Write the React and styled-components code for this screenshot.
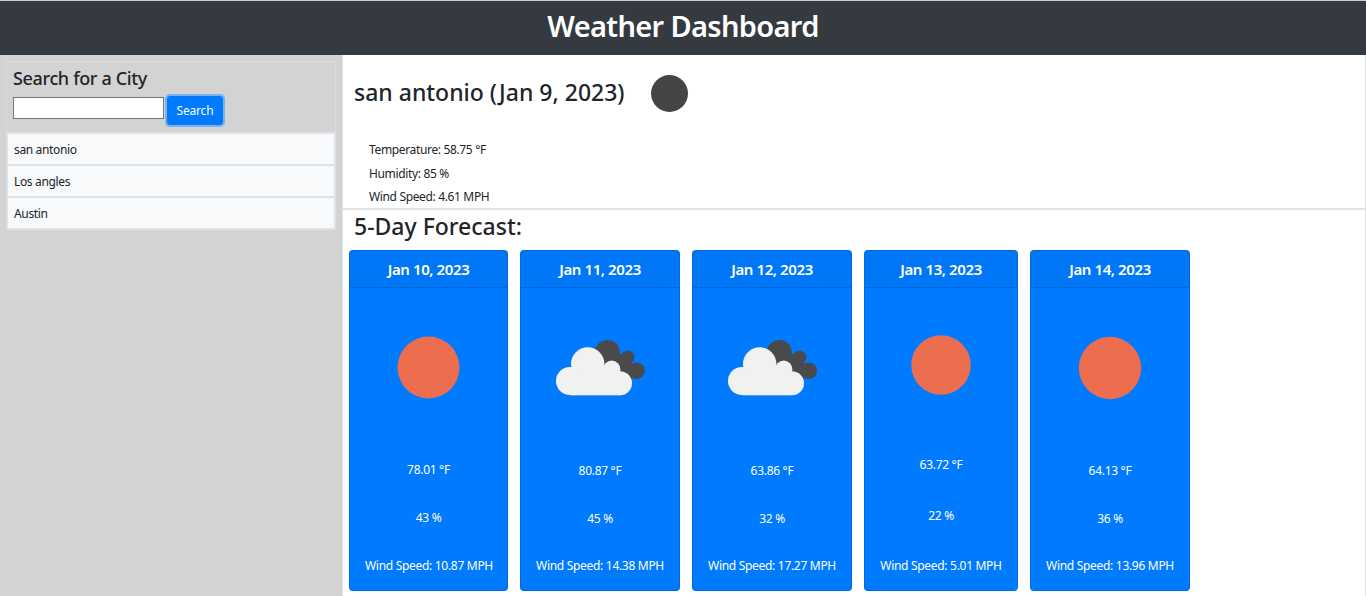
import styled, { createGlobalStyle } from "styled-components";

const FONT = '"Noto Sans", "Open Sans", sans-serif';

const forecast = [
  { date: "Jan 10, 2023", icon: "sun", temp: "78.01", humidity: 43, wind: "10.87", width: 159 },
  { date: "Jan 11, 2023", icon: "cloud", temp: "80.87", humidity: 45, wind: "14.38", width: 160 },
  { date: "Jan 12, 2023", icon: "cloud", temp: "63.86", humidity: 32, wind: "17.27", width: 160 },
  { date: "Jan 13, 2023", icon: "sun", temp: "63.72", humidity: 22, wind: "5.01", width: 154 },
  { date: "Jan 14, 2023", icon: "sun", temp: "64.13", humidity: 36, wind: "13.96", width: 160 },
];

const cities = ["san antonio", "Los angles", "Austin"];

function SunIcon() {
  return (
    <IconSvg viewBox="0 0 128 128">
      <circle cx="64" cy="64" r="31.2" fill="#ed6e4e" />
    </IconSvg>
  );
}

function CloudIcon() {
  return (
    <IconSvg viewBox="0 0 128 128">
      <g fill="#4a4a4d">
        <circle cx="71.3" cy="48.7" r="12.7" />
        <circle cx="91.7" cy="53.3" r="6.7" />
        <circle cx="100.7" cy="66.7" r="8.3" />
        <rect x="66" y="55" width="30" height="20" />
        <rect x="80" y="50" width="8" height="10" />
      </g>
      <g fill="#f1f1ef">
        <circle cx="51.7" cy="60" r="16.7" />
        <circle cx="75.7" cy="65.3" r="8.7" />
        <circle cx="84" cy="79.3" r="12" />
        <circle cx="34" cy="77" r="14" />
        <rect x="34" y="68" width="50" height="23.3" />
        <rect x="60" y="62" width="16" height="10" />
      </g>
    </IconSvg>
  );
}

function ForecastCard({ day }) {
  return (
    <Card $width={day.width}>
      <CardHeader>{day.date}</CardHeader>
      <CardBody>
        {day.icon === "sun" ? <SunIcon /> : <CloudIcon />}
        <CardLines>
          <CardLine>{day.temp} °F</CardLine>
          <CardLine>{day.humidity} %</CardLine>
          <CardLine>Wind Speed: {day.wind} MPH</CardLine>
        </CardLines>
      </CardBody>
    </Card>
  );
}

export default function App() {
  return (
    <>
      <GlobalStyle />
      <Header>
        <Title>Weather Dashboard</Title>
      </Header>
      <Layout>
        <Sidebar>
          <SearchCard>
            <SearchTitle>Search for a City</SearchTitle>
            <SearchForm>
              <SearchInput type="text" />
              <SearchButton type="button">Search</SearchButton>
            </SearchForm>
          </SearchCard>
          <CityList>
            {cities.map((city) => (
              <CityItem key={city}>{city}</CityItem>
            ))}
          </CityList>
        </Sidebar>
        <Main>
          <Current>
            <CurrentHead>
              <CityName>san antonio (Jan 9, 2023)</CityName>
              <MoonDot />
            </CurrentHead>
            <Stats>
              <Stat>Temperature: 58.75 °F</Stat>
              <Stat>Humidity: 85 %</Stat>
              <Stat>Wind Speed: 4.61 MPH</Stat>
            </Stats>
          </Current>
          <ForecastTitle>5-Day Forecast:</ForecastTitle>
          <CardRow>
            {forecast.map((day) => (
              <ForecastCard key={day.date} day={day} />
            ))}
          </CardRow>
        </Main>
      </Layout>
    </>
  );
}

const GlobalStyle = createGlobalStyle`
  html, body {
    margin: 0;
    padding: 0;
    height: 596px;
    overflow: hidden;
    background: #fff;
    color: #212529;
    font-family: ${FONT};
  }
  * {
    box-sizing: border-box;
  }
`;

const Header = styled.header`
  height: 55px;
  padding-bottom: 5px;
  background: #343a40;
  border-top: 1px solid #c8cacc;
  display: flex;
  align-items: center;
  justify-content: center;
`;

const Title = styled.h1`
  margin: 0;
  color: #fff;
  font-size: 29px;
  font-weight: 600;
  line-height: 1;
  letter-spacing: -0.65px;
`;

const Layout = styled.div`
  display: flex;
  height: 541px;
`;

const Sidebar = styled.aside`
  width: 342px;
  flex: none;
  background: #d3d3d3;
  padding: 6px;
`;

const SearchCard = styled.div`
  width: 330px;
  height: 71px;
  border: 1px solid #dcdcdc;
  border-bottom: none;
  padding: 5px 6px 0;
`;

const SearchTitle = styled.h4`
  margin: 0 0 7px;
  font-size: 18px;
  font-weight: 500;
  line-height: 22px;
  letter-spacing: -0.35px;
`;

const SearchForm = styled.div`
  display: flex;
  align-items: flex-start;
  gap: 3px;
`;

const SearchInput = styled.input`
  width: 151px;
  height: 22px;
  margin-top: 1px;
  padding: 1px 2px;
  border: 1px solid #767676;
  background: #fff;
`;

const SearchButton = styled.button`
  width: 56px;
  height: 29px;
  border: 1px solid #007bff;
  border-radius: 3px;
  background: #007bff;
  box-shadow: 0 0 0 2px rgba(38, 143, 255, 0.5);
  color: #fff;
  font-family: ${FONT};
  font-size: 12px;
  letter-spacing: -0.2px;
  padding: 0;
`;

const CityList = styled.ul`
  width: 330px;
  margin: 0;
  padding: 0;
  list-style: none;
  border: 2px solid #dee2e6;
`;

const CityItem = styled.li`
  height: 32px;
  padding: 1px 6px 0;
  display: flex;
  align-items: center;
  background: #f8f9fa;
  border-bottom: 2px solid #dee2e6;
  font-size: 12px;
  letter-spacing: -0.35px;

  &:last-child {
    height: 30px;
    border-bottom: none;
  }
`;

const Main = styled.main`
  flex: 1;
  min-width: 0;
  border-left: 1px solid #dee2e6;
  border-right: 1px solid #dee2e6;
`;

const Current = styled.section`
  height: 155px;
  border-bottom: 2px solid #dee2e6;
  padding-left: 11px;
`;

const CurrentHead = styled.div`
  height: 74px;
  display: flex;
  align-items: center;
  gap: 26px;
`;

const CityName = styled.h2`
  margin: 0 0 1px;
  font-size: 23px;
  font-weight: 500;
  line-height: 28px;
  letter-spacing: 0;
`;

const MoonDot = styled.span`
  width: 37px;
  height: 37px;
  margin-top: 2px;
  border-radius: 50%;
  background: #454547;
`;

const Stats = styled.ul`
  margin: 9px 0 0;
  padding: 0 0 0 15px;
  list-style: none;
`;

const Stat = styled.li`
  font-size: 12px;
  line-height: 23.5px;
  letter-spacing: -0.35px;
`;

const ForecastTitle = styled.h3`
  margin: 0;
  padding: 1px 0 0 11px;
  height: 40px;
  font-size: 23px;
  font-weight: 500;
  line-height: 30px;
  letter-spacing: 0;
`;

const CardRow = styled.div`
  height: 341px;
  display: flex;
  gap: 12px;
  padding-left: 6px;
  align-items: stretch;
`;

const Card = styled.article`
  width: ${(props) => props.$width}px;
  flex: none;
  display: flex;
  flex-direction: column;
  border: 1px solid rgba(0, 0, 0, 0.125);
  border-radius: 4px;
  background: #007bff;
  color: #fff;
  overflow: hidden;
`;

const CardHeader = styled.div`
  height: 37px;
  flex: none;
  display: flex;
  align-items: center;
  justify-content: center;
  background: rgba(0, 0, 0, 0.03);
  border-bottom: 1px solid rgba(0, 0, 0, 0.125);
  font-size: 15px;
  font-weight: 600;
  letter-spacing: -0.4px;
`;

const CardBody = styled.div`
  flex: 1;
  min-height: 0;
  display: flex;
  flex-direction: column;
  padding: 16px 15px 15px;
  text-align: center;
`;

const IconSvg = styled.svg`
  display: block;
  flex: none;
  width: 100%;
  aspect-ratio: 1;
  margin-bottom: 30px;
`;

const CardLines = styled.div`
  flex: 1;
  min-height: 0;
  display: flex;
  flex-direction: column;
  justify-content: space-between;
`;

const CardLine = styled.p`
  margin: 0;
  font-size: 12px;
  line-height: 18px;
  letter-spacing: -0.3px;
  white-space: nowrap;
`;
